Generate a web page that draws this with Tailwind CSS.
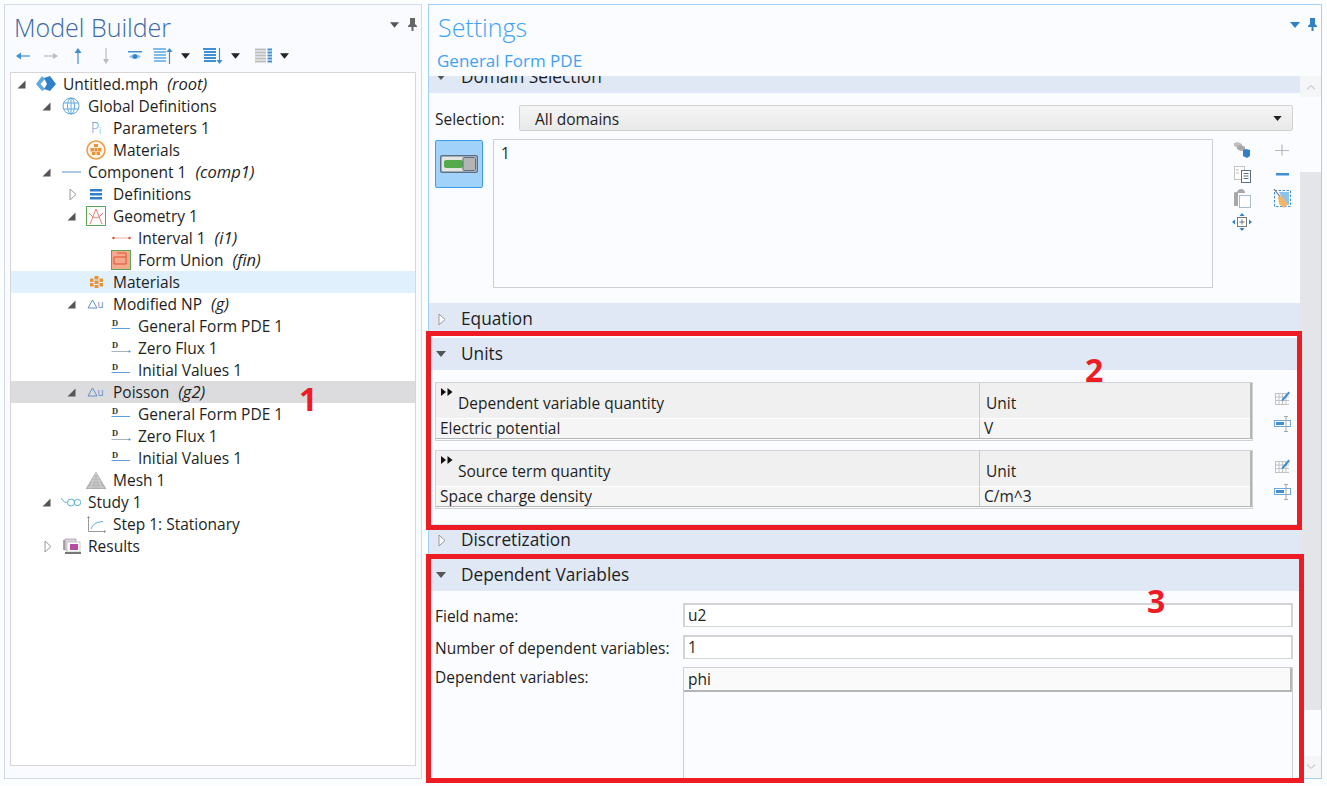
<!DOCTYPE html>
<html lang="en">
<head>
    <meta charset="UTF-8"/>
    <title>Model Builder - Settings</title>
    <script src="https://cdn.jsdelivr.net/npm/@tailwindcss/browser@4"></script>
</head>
<body class="relative h-[786px] w-[1327px] overflow-hidden bg-[#fcfdff] font-['Open_Sans',sans-serif] text-[15.5px] text-[#1e1e1e]">

<!-- Shared icons -->
<svg class="hidden" xmlns="http://www.w3.org/2000/svg">
    <symbol id="open" viewBox="0 0 9 9"><polygon points="8.5,0.5 8.5,8.5 0.5,8.5" fill="#555"/></symbol>
    <symbol id="closed" viewBox="0 0 8 13"><polygon points="1,1 7,6.5 1,12" fill="#fff" stroke="#9a9a9a"/></symbol>
    <symbol id="caret" viewBox="0 0 10 6"><polygon points="0,0 10,0 5,6" fill="#222"/></symbol>
    <symbol id="ffwd" viewBox="0 0 12 8"><polygon points="0,0 5,4 0,8" fill="#111"/><polygon points="6.5,0 11.5,4 6.5,8" fill="#111"/></symbol>
    <symbol id="pde" viewBox="0 0 20 16">
        <text x="1" y="7.5" font-family="Liberation Serif" font-weight="700" font-size="8.5" fill="#333">D</text>
        <line x1="0.5" y1="10.5" x2="19" y2="10.5" stroke="#5a9fd8"/>
    </symbol>
    <symbol id="flux" viewBox="0 0 20 16">
        <text x="1" y="7.5" font-family="Liberation Serif" font-weight="700" font-size="8.5" fill="#333">D</text>
        <line x1="0.5" y1="11.5" x2="18" y2="11.5" stroke="#a9b4c2"/><circle cx="18.5" cy="11.5" r="1" fill="#3f8fd2"/>
    </symbol>
    <symbol id="physics" viewBox="0 0 18 12">
        <polygon points="1,10 5.5,2 10,10" fill="none" stroke="#5f8fc8"/>
        <text x="10.5" y="10" font-family="Open Sans" font-size="10" fill="#5f8fc8">u</text>
    </symbol>
    <symbol id="table-edit" viewBox="0 0 16 16">
        <path d="M1 3.5h11M1 7h14M1 10.5h14M1 14.5h14M1.5 3v12M5 3v12M8.500 3v12M12 3v12" stroke="#c2c2c2" fill="none"/>
        <path d="M8 9l6.500-7.500 1.500 1.500-6.500 7.500-2 .500z" fill="#3f8fd2"/>
    </symbol>
    <symbol id="table-size" viewBox="0 0 18 16">
        <rect x="0.500" y="4.500" width="16" height="6" fill="#fff" stroke="#6ea8d8"/>
        <rect x="2" y="6" width="8" height="3" fill="#3f8fd2"/>
        <path d="M12 1v14M10 .5h4M10 15.500h4" stroke="#a8a8a8" fill="none"/>
    </symbol>
</svg>

<div class="flex gap-[6px] pl-[4px] pt-[4px]">

    <!-- Model Builder -->
    <section class="flex h-[775px] w-[418px] flex-col border border-[#d3dbe9] bg-[#f9fbff]">
        <div class="flex h-[39px] shrink-0 items-center justify-between pl-[9px] pr-[4px]">
            <h1 class="pt-[6px] text-[25px] font-light text-[#3d69a6]">Model Builder</h1>
            <div class="flex items-center gap-[9px]">
                <svg class="h-[6px] w-[9px]" viewBox="0 0 10 6"><polygon points="0,0 10,0 5,6" fill="#555"/></svg>
                <svg class="h-[13px] w-[9px]" viewBox="0 0 9 13"><path d="M2 0h5v6l2 2v1H5.500v4h-2V9H0V8l2-2z" fill="#666"/></svg>
            </div>
        </div>
        <div class="flex h-[28px] shrink-0 items-center pb-[5px] pl-[11px]">
            <svg class="h-[10px] w-[14px]" viewBox="0 0 14 10"><path d="M4 5h10" stroke="#3f8fd2" stroke-width="1.200"/><polygon points="0,5 5,1.500 5,8.500" fill="#3f8fd2"/></svg>
            <svg class="ml-[14px] h-[10px] w-[14px]" viewBox="0 0 14 10"><path d="M0 5h10" stroke="#bbb" stroke-width="1.200"/><polygon points="14,5 9,2 9,8" fill="#bbb"/></svg>
            <svg class="ml-[15px] h-[16px] w-[10px]" viewBox="0 0 10 16"><path d="M5 4v12" stroke="#3f8fd2" stroke-width="1.200"/><polygon points="5,0 1.500,5 8.500,5" fill="#3f8fd2"/></svg>
            <svg class="ml-[18px] h-[16px] w-[10px]" viewBox="0 0 10 16"><path d="M5 0v12" stroke="#bbb" stroke-width="1.200"/><polygon points="5,16 2,11 8,11" fill="#bbb"/></svg>
            <svg class="ml-[17px] h-[10px] w-[14px]" viewBox="0 0 14 10"><rect x="0" y="0" width="14" height="1.500" fill="#3f8fd2"/><path d="M1 5.500Q7 0.500 13 5.500Q7 10.500 1 5.500z" fill="#8fc0e8"/><circle cx="7" cy="5.500" r="2.200" fill="#2f7fc4"/></svg>
            <svg class="ml-[11px] h-[16px] w-[20px]" viewBox="0 0 20 16"><path d="M0 1h13M1 4h12M1 7h12M1 10h12M1 13h12" stroke="#5ba6e0" stroke-width="1.500"/><path d="M16.500 3v13" stroke="#3f8fd2" stroke-width="1.200"/><polygon points="16.500,0 13.500,4 19.500,4" fill="#3f8fd2"/></svg>
            <svg class="ml-[8px] h-[6px] w-[9px]"><use href="#caret"/></svg>
            <svg class="ml-[13px] h-[16px] w-[20px]" viewBox="0 0 20 16"><path d="M0 1h13M1 4h12M1 7h12M1 10h12M1 13h12" stroke="#3f8fd2" stroke-width="1.800"/><path d="M16.500 0v13" stroke="#3f8fd2" stroke-width="1.200"/><polygon points="16.500,16 13.500,12 19.500,12" fill="#3f8fd2"/></svg>
            <svg class="ml-[8px] h-[6px] w-[9px]"><use href="#caret"/></svg>
            <svg class="ml-[15px] h-[16px] w-[17px]" viewBox="0 0 17 16"><path d="M0 1.500h11M0 4.500h11M0 7.500h11M0 10.500h11M0 13.500h11" stroke="#bdbdbd" stroke-width="1.800"/><path d="M12.500 1.500h4.500M12.500 4.500h4.500M12.500 7.500h4.500M12.500 10.500h4.500M12.500 13.500h4.500" stroke="#3f8fd2" stroke-width="1.800"/></svg>
            <svg class="ml-[8px] h-[6px] w-[9px]"><use href="#caret"/></svg>
        </div>

        <!-- Tree -->
        <div class="mx-[5px] h-[694px] border border-[#d6d6d6] bg-white [&>div>span:last-child]:pt-[2px] [&_i]:text-[16.5px] [&_i]:leading-none">
            <div class="flex h-[22px] items-center pl-[5px]">
                <span class="flex w-[18px] pl-[1px]"><svg class="h-[9px] w-[9px]"><use href="#open"/></svg></span>
                <span class="flex w-[24px] justify-center"><svg class="h-[16px] w-[20px]" viewBox="0 0 20 16"><polygon points="6,0 0,8 6,15 9,13 4.500,8 9,3" fill="#62a8de"/><polygon points="8,2 14,0 20,8 14,15 8,13 11,8" fill="#2f80c8"/></svg></span>
                <span class="ml-[5px] whitespace-nowrap">Untitled.mph<i class="ml-[9px]">(root)</i></span>
            </div>
            <div class="flex h-[22px] items-center pl-[30px]">
                <span class="flex w-[18px] pl-[1px]"><svg class="h-[9px] w-[9px]"><use href="#open"/></svg></span>
                <span class="flex w-[24px] justify-center"><svg class="h-[18px] w-[18px]" viewBox="0 0 18 18" fill="none" stroke="#62a8de"><circle cx="9" cy="9" r="8"/><ellipse cx="9" cy="9" rx="3.500" ry="8"/><path d="M9 1v16M1.500 6h15M1.500 12h15"/></svg></span>
                <span class="ml-[5px] whitespace-nowrap">Global Definitions</span>
            </div>
            <div class="flex h-[22px] items-center pl-[55px]">
                <span class="w-[18px]"></span>
                <span class="flex w-[24px] justify-center"><svg class="h-[16px] w-[16px]" viewBox="0 0 16 16"><text x="3" y="13" font-family="Open Sans" font-size="14" font-weight="300" fill="#4d9ada">P</text><text x="11" y="14" font-family="Open Sans" font-size="9" font-weight="300" fill="#4d9ada">i</text></svg></span>
                <span class="ml-[5px] whitespace-nowrap">Parameters 1</span>
            </div>
            <div class="flex h-[22px] items-center pl-[55px]">
                <span class="w-[18px]"></span>
                <span class="flex w-[24px] justify-center"><svg class="h-[20px] w-[20px]" viewBox="0 0 20 20"><circle cx="10" cy="10" r="9" fill="#fdf3e6" stroke="#ec9c45" stroke-width="1.500"/><path d="M8 4h4v3H8zM4.500 8h3.500v3.500H4.500zM8.500 8h3v3.500h-3zM12 8h3.500v3.500H12zM6 12h3.500v3H6zM10.500 12h3.500v3h-3.500z" fill="#e8923a"/></svg></span>
                <span class="ml-[5px] whitespace-nowrap">Materials</span>
            </div>
            <div class="flex h-[22px] items-center pl-[30px]">
                <span class="flex w-[18px] pl-[1px]"><svg class="h-[9px] w-[9px]"><use href="#open"/></svg></span>
                <span class="flex w-[24px] justify-center"><svg class="h-[2px] w-[19px]" viewBox="0 0 19 2"><path d="M0 1h19" stroke="#5f8fc8"/></svg></span>
                <span class="ml-[5px] whitespace-nowrap">Component 1<i class="ml-[9px]">(comp1)</i></span>
            </div>
            <div class="flex h-[22px] items-center pl-[55px]">
                <span class="flex w-[18px] pl-[3px]"><svg class="h-[13px] w-[8px]"><use href="#closed"/></svg></span>
                <span class="flex w-[24px] justify-center"><svg class="h-[11px] w-[12px]" viewBox="0 0 12 11"><path d="M0 0h12v2.500H0zM0 4h12v2.500H0zM0 8h12v2.500H0z" fill="#2f80c8"/></svg></span>
                <span class="ml-[5px] whitespace-nowrap">Definitions</span>
            </div>
            <div class="flex h-[22px] items-center pl-[55px]">
                <span class="flex w-[18px] pl-[1px]"><svg class="h-[9px] w-[9px]"><use href="#open"/></svg></span>
                <span class="flex w-[24px] justify-center"><svg class="h-[20px] w-[20px]" viewBox="0 0 20 20"><rect x="0.500" y="0.500" width="19" height="19" fill="#fff" stroke="#58a858"/><path d="M4 18L10 3l6 15M3 7q7 10 14 0" fill="none" stroke="#e88070"/></svg></span>
                <span class="ml-[5px] whitespace-nowrap">Geometry 1</span>
            </div>
            <div class="flex h-[22px] items-center pl-[80px]">
                <span class="w-[18px]"></span>
                <span class="flex w-[24px] justify-center"><svg class="h-[6px] w-[19px]" viewBox="0 0 19 6"><path d="M0 3h19" stroke="#f0b0a0"/><circle cx="1.500" cy="3" r="1.200" fill="#e05030"/><circle cx="17.500" cy="3" r="1.200" fill="#e05030"/></svg></span>
                <span class="ml-[5px] whitespace-nowrap">Interval 1<i class="ml-[9px]">(i1)</i></span>
            </div>
            <div class="flex h-[22px] items-center pl-[80px]">
                <span class="w-[18px]"></span>
                <span class="flex w-[24px] justify-center"><svg class="h-[20px] w-[20px]" viewBox="0 0 20 20"><rect x="0.500" y="0.500" width="19" height="19" fill="#f4a98c" stroke="#58a858"/><path d="M6 3h9v11H3V7h12" fill="none" stroke="#e05030"/></svg></span>
                <span class="ml-[5px] whitespace-nowrap">Form Union<i class="ml-[9px]">(fin)</i></span>
            </div>
            <div class="flex h-[22px] items-center bg-[#e0f0fd] pl-[55px]">
                <span class="w-[18px]"></span>
                <span class="flex w-[24px] justify-center"><svg class="h-[12px] w-[13px]" viewBox="0 0 13 12"><path d="M4.500 0h4v3.500h-4zM0 2.500h3.500v3.500H0zM9.500 2.500H13v3.500H9.500zM4.500 4.500h4v3.500h-4zM0 7h3.500v3.500H0zM9.500 7H13v3.500H9.500zM4.500 9h4v3h-4z" fill="#e8923a"/></svg></span>
                <span class="ml-[5px] whitespace-nowrap">Materials</span>
            </div>
            <div class="flex h-[22px] items-center pl-[55px]">
                <span class="flex w-[18px] pl-[1px]"><svg class="h-[9px] w-[9px]"><use href="#open"/></svg></span>
                <span class="flex w-[24px] justify-center"><svg class="h-[12px] w-[18px]"><use href="#physics"/></svg></span>
                <span class="ml-[5px] whitespace-nowrap">Modified NP<i class="ml-[9px]">(g)</i></span>
            </div>
            <div class="flex h-[22px] items-center pl-[80px]">
                <span class="w-[18px]"></span>
                <span class="flex w-[24px] justify-center"><svg class="h-[16px] w-[20px]"><use href="#pde"/></svg></span>
                <span class="ml-[5px] whitespace-nowrap">General Form PDE 1</span>
            </div>
            <div class="flex h-[22px] items-center pl-[80px]">
                <span class="w-[18px]"></span>
                <span class="flex w-[24px] justify-center"><svg class="h-[16px] w-[20px]"><use href="#flux"/></svg></span>
                <span class="ml-[5px] whitespace-nowrap">Zero Flux 1</span>
            </div>
            <div class="flex h-[22px] items-center pl-[80px]">
                <span class="w-[18px]"></span>
                <span class="flex w-[24px] justify-center"><svg class="h-[16px] w-[20px]"><use href="#pde"/></svg></span>
                <span class="ml-[5px] whitespace-nowrap">Initial Values 1</span>
            </div>
            <div class="flex h-[22px] items-center bg-[#dcdcde] pl-[55px]">
                <span class="flex w-[18px] pl-[1px]"><svg class="h-[9px] w-[9px]"><use href="#open"/></svg></span>
                <span class="flex w-[24px] justify-center"><svg class="h-[12px] w-[18px]"><use href="#physics"/></svg></span>
                <span class="ml-[5px] whitespace-nowrap">Poisson<i class="ml-[9px]">(g2)</i></span>
            </div>
            <div class="flex h-[22px] items-center pl-[80px]">
                <span class="w-[18px]"></span>
                <span class="flex w-[24px] justify-center"><svg class="h-[16px] w-[20px]"><use href="#pde"/></svg></span>
                <span class="ml-[5px] whitespace-nowrap">General Form PDE 1</span>
            </div>
            <div class="flex h-[22px] items-center pl-[80px]">
                <span class="w-[18px]"></span>
                <span class="flex w-[24px] justify-center"><svg class="h-[16px] w-[20px]"><use href="#flux"/></svg></span>
                <span class="ml-[5px] whitespace-nowrap">Zero Flux 1</span>
            </div>
            <div class="flex h-[22px] items-center pl-[80px]">
                <span class="w-[18px]"></span>
                <span class="flex w-[24px] justify-center"><svg class="h-[16px] w-[20px]"><use href="#pde"/></svg></span>
                <span class="ml-[5px] whitespace-nowrap">Initial Values 1</span>
            </div>
            <div class="flex h-[22px] items-center pl-[55px]">
                <span class="w-[18px]"></span>
                <span class="flex w-[24px] justify-center"><svg class="h-[17px] w-[20px]" viewBox="0 0 20 17"><polygon points="10,0 20,17 0,17" fill="#b5b5b5" stroke="#999" stroke-width="0.500"/><path d="M7 6h6M5 9h10M3.500 12h13M2 15h16M10 0L4 17M10 0l6 17" stroke="#e4e4e4" stroke-width="0.500" fill="none"/></svg></span>
                <span class="ml-[5px] whitespace-nowrap">Mesh 1</span>
            </div>
            <div class="flex h-[22px] items-center pl-[30px]">
                <span class="flex w-[18px] pl-[1px]"><svg class="h-[9px] w-[9px]"><use href="#open"/></svg></span>
                <span class="flex w-[24px] justify-center"><svg class="h-[10px] w-[20px]" viewBox="0 0 20 10" fill="none" stroke="#58b0d0"><circle cx="10" cy="5.500" r="3.500"/><circle cx="16.500" cy="5.500" r="3.200"/><path d="M13.500 5q0-1-.500-1M6.500 5Q4 7 0 1"/></svg></span>
                <span class="ml-[5px] whitespace-nowrap">Study 1</span>
            </div>
            <div class="flex h-[22px] items-center pl-[55px]">
                <span class="w-[18px]"></span>
                <span class="flex w-[24px] justify-center"><svg class="h-[17px] w-[19px]" viewBox="0 0 19 17" fill="none"><path d="M1.500 1v14.500H18" stroke="#999"/><path d="M0 2l1.500-2 1.500 2zM17 14l2 1.500-2 1.500z" fill="#888"/><path d="M4 13Q6 6 16 5.500" stroke="#58b0d0"/></svg></span>
                <span class="ml-[5px] whitespace-nowrap">Step 1: Stationary</span>
            </div>
            <div class="flex h-[22px] items-center pl-[30px]">
                <span class="flex w-[18px] pl-[3px]"><svg class="h-[13px] w-[8px]"><use href="#closed"/></svg></span>
                <span class="flex w-[24px] justify-center"><svg class="h-[17px] w-[19px]" viewBox="0 0 19 17"><path d="M1 2h10v10H1z" fill="#aaa"/><path d="M3 1h11v11H3z" fill="#e0d4e4" stroke="#8a6a8f" stroke-width="0.500"/><rect x="5" y="4" width="13" height="10" fill="#fff" stroke="#999" stroke-width="0.500"/><rect x="8" y="6" width="8" height="6" fill="#b64da0"/><path d="M3 15h16" stroke="#777" stroke-width="2"/></svg></span>
                <span class="ml-[5px] whitespace-nowrap">Results</span>
            </div>
        </div>
    </section>

    <!-- Settings -->
    <section class="flex h-[775px] w-[894px] flex-col border border-[#a0d0f8] bg-[#fafcff]">
        <div class="flex h-[39px] shrink-0 items-center justify-between pl-[9px] pr-[4px]">
            <h1 class="pt-[6px] text-[25px] font-light text-[#3fa3f2]">Settings</h1>
            <div class="flex items-center gap-[7px]">
                <svg class="h-[6px] w-[12px]" viewBox="0 0 10 6"><polygon points="0,0 10,0 5,6" fill="#2f80c8"/></svg>
                <svg class="h-[13px] w-[9px]" viewBox="0 0 9 13"><path d="M2 0h5v6l2 2v1H5.500v4h-2V9H0V8l2-2z" fill="#2f80c8"/></svg>
            </div>
        </div>
        <div class="h-[32px] shrink-0 pl-[8px] text-[17px] leading-[34px] text-[#3fa3f2]">General Form PDE</div>

        <div class="flex min-h-0 flex-1">
            <div class="w-[871px] overflow-hidden">
                <div class="-mt-[15px]">

                    <!-- Domain Selection -->
                    <div class="flex h-[32px] items-center bg-[#dfe8f4] text-[17.25px]">
                        <span class="flex w-[32px] pl-[7px]"><svg class="h-[6px] w-[10px]" viewBox="0 0 10 6"><polygon points="0,0 10,0 5,6" fill="#555"/></svg></span>
                        Domain Selection
                    </div>
                    <div class="flex items-center pl-[6px] pr-[7px] pt-[12px]">
                        <span class="w-[84px] pt-[2px] leading-[20px]">Selection:</span>
                        <div class="flex h-[26px] flex-1 items-center justify-between rounded-[2px] border border-[#d2d2d2] bg-gradient-to-b from-[#f5f5f5] to-[#e9e9e9] pl-[15px] pr-[10px]">
                            <span class="pt-[2px] leading-[20px]">All domains</span>
                            <svg class="h-[5px] w-[9px]"><use href="#caret"/></svg>
                        </div>
                    </div>
                    <div class="flex pl-[6px] pt-[8px]">
                        <div class="mt-[1px] flex h-[48px] w-[48px] items-center justify-center rounded-[2px] border border-[#3e9cf0] bg-[#a0d2fa]">
                            <svg class="h-[18px] w-[38px]" viewBox="0 0 38 18"><rect x="0.750" y="0.750" width="36.500" height="16.500" rx="1.500" fill="#e4e4e0" stroke="#5c7188" stroke-width="1.500"/><rect x="4" y="5" width="19" height="8" rx="2" fill="#55ab4b"/><rect x="23" y="2.500" width="12.500" height="13" rx="1" fill="#b4b4b4" stroke="#5c7188"/></svg>
                        </div>
                        <div class="ml-[10px] h-[149px] w-[720px] border border-[#cfcfcf] pl-[7px] pt-[2px]">1</div>
                        <div class="-mt-[1px] ml-[19px] grid h-[96px] grid-cols-[20px_20px] grid-rows-4 items-center justify-items-center gap-x-[20px]">
                            <svg class="h-[16px] w-[16px]" viewBox="0 0 16 16"><path d="M0 1l4-1 4 2v3l-4 1-4-2z" fill="#c0c0c0"/><path d="M3 4l4-1 4 2v3l-4 1-4-2z" fill="#a8a8a8"/><path d="M9 8l3-1 4 1v6l-3 2-4-2z" fill="#2f80c8"/></svg>
                            <svg class="h-[12px] w-[14px]" viewBox="0 0 14 12"><path d="M0 6.500h14M7 0.500v11" stroke="#b8b8b8" stroke-width="1.200"/></svg>
                            <svg class="h-[17px] w-[17px]" viewBox="0 0 17 17"><rect x="0.500" y="0.500" width="10" height="13" fill="#fff" stroke="#c4c4c4"/><path d="M2 4h3M2 7h3" stroke="#bbb"/><rect x="7.500" y="4.500" width="9" height="12" fill="#fff" stroke="#5c7188"/><path d="M9.500 7.500h5M9.500 10h5M9.500 12.500h5" stroke="#5c7188" stroke-width="1.200"/></svg>
                            <svg class="h-[3px] w-[13px]" viewBox="0 0 13 3"><rect width="13" height="2.500" fill="#3f8fd2"/></svg>
                            <svg class="h-[19px] w-[17px]" viewBox="0 0 17 19"><path d="M0 4Q0 3 2 3h1Q4 0 7 0t4 3v1H4v13H0z" fill="#a8a8a8"/><rect x="5.500" y="6.500" width="11" height="12" fill="#fff" stroke="#a9bcd0"/></svg>
                            <svg class="h-[19px] w-[18px]" viewBox="0 0 18 19"><rect x="1.500" y="1.500" width="16" height="16" fill="#fff" stroke="#3f8fd2" stroke-dasharray="2.500 1.500"/><polygon points="6,3 16,3 16,16 12,16" fill="#8cc4f0"/><path d="M1 0l7 9" stroke="#777" stroke-width="1.200"/><path d="M5 8l4-1 6 8-4 4-5-4z" fill="#f2b56c"/></svg>
                            <svg class="h-[18px] w-[20px]" viewBox="0 0 20 18"><rect x="5.500" y="4.500" width="9" height="9" fill="#fff" stroke="#777"/><path d="M10 6.500v5M7.500 9h5" stroke="#777"/><path d="M10 0l-2.500 3h5zM10 18l-2.500-3h5zM0 9l3-2.500v5zM20 9l-3-2.500v5z" fill="#2f80c8"/></svg>
                        </div>
                    </div>

                    <!-- Equation -->
                    <div class="mt-[15px] flex h-[32px] items-center bg-[#dfe8f4] text-[17.25px]">
                        <span class="flex w-[32px] pl-[9px]"><svg class="h-[13px] w-[8px]"><use href="#closed"/></svg></span>
                        Equation
                    </div>

                    <!-- Units -->
                    <div class="mt-[3px] flex h-[32px] items-center bg-[#dfe8f4] text-[17.25px]">
                        <span class="flex w-[32px] pl-[7px]"><svg class="h-[6px] w-[10px]" viewBox="0 0 10 6"><polygon points="0,0 10,0 5,6" fill="#555"/></svg></span>
                        Units
                    </div>
                    <div class="flex pl-[6px] pt-[12px]">
                        <div class="h-[59px] w-[818px] border border-[#d2d2d2]">
                            <div class="grid h-[56px] grid-cols-[543px_1fr] border-r-2 border-b-2 border-[#b5b5b5]">
                                <div class="h-[35px] bg-[#f0f0f0] pl-[5px] pt-[5px] leading-[14px]"><svg class="block h-[8px] w-[12px]"><use href="#ffwd"/></svg><span class="ml-[17px]">Dependent variable quantity</span></div>
                                <div class="h-[35px] border-l border-[#c8c8c8] bg-[#f0f0f0] pl-[6px] pt-[13px] leading-[14px]">Unit</div>
                                <div class="h-[20px] border-t border-white bg-[#f5f5f5] pl-[4px] leading-[18px]">Electric potential</div>
                                <div class="h-[20px] border-l border-t border-l-[#c8c8c8] border-t-white bg-[#f5f5f5] pl-[4px] leading-[18px]">V</div>
                            </div>
                        </div>
                        <div class="ml-[21px] flex flex-col gap-[10px] pt-[8px]">
                            <svg class="h-[16px] w-[16px]"><use href="#table-edit"/></svg>
                            <svg class="h-[16px] w-[18px]"><use href="#table-size"/></svg>
                        </div>
                    </div>
                    <div class="flex pl-[6px] pt-[9px]">
                        <div class="h-[59px] w-[818px] border border-[#d2d2d2]">
                            <div class="grid h-[56px] grid-cols-[543px_1fr] border-r-2 border-b-2 border-[#b5b5b5]">
                                <div class="h-[35px] bg-[#f0f0f0] pl-[5px] pt-[5px] leading-[14px]"><svg class="block h-[8px] w-[12px]"><use href="#ffwd"/></svg><span class="ml-[17px]">Source term quantity</span></div>
                                <div class="h-[35px] border-l border-[#c8c8c8] bg-[#f0f0f0] pl-[6px] pt-[13px] leading-[14px]">Unit</div>
                                <div class="h-[20px] border-t border-white bg-[#f5f5f5] pl-[4px] leading-[18px]">Space charge density</div>
                                <div class="h-[20px] border-l border-t border-l-[#c8c8c8] border-t-white bg-[#f5f5f5] pl-[4px] leading-[18px]">C/m^3</div>
                            </div>
                        </div>
                        <div class="ml-[21px] flex flex-col gap-[10px] pt-[8px]">
                            <svg class="h-[16px] w-[16px]"><use href="#table-edit"/></svg>
                            <svg class="h-[16px] w-[18px]"><use href="#table-size"/></svg>
                        </div>
                    </div>

                    <!-- Discretization -->
                    <div class="mt-[15px] flex h-[32px] items-center bg-[#dfe8f4] text-[17.25px]">
                        <span class="flex w-[32px] pl-[9px]"><svg class="h-[13px] w-[8px]"><use href="#closed"/></svg></span>
                        Discretization
                    </div>

                    <!-- Dependent Variables -->
                    <div class="mt-[3px] flex h-[32px] items-center bg-[#dfe8f4] text-[17.25px]">
                        <span class="flex w-[32px] pl-[7px]"><svg class="h-[6px] w-[10px]" viewBox="0 0 10 6"><polygon points="0,0 10,0 5,6" fill="#555"/></svg></span>
                        Dependent Variables
                    </div>
                    <div class="flex flex-col gap-[8px] pl-[6px] pr-[7px] pt-[12px]">
                        <div class="flex items-center">
                            <span class="w-[248px] pt-[2px] leading-[20px]">Field name:</span>
                            <div class="h-[24px] flex-1 border-2 border-b border-[#d4d4d4] bg-white pl-[3px] leading-[21px]">u2</div>
                        </div>
                        <div class="flex items-center">
                            <span class="w-[248px] pt-[2px] leading-[20px]">Number of dependent variables:</span>
                            <div class="h-[24px] flex-1 border-2 border-b border-[#d4d4d4] bg-white pl-[3px] leading-[21px]">1</div>
                        </div>
                        <div class="flex">
                            <span class="w-[248px] leading-[20px]">Dependent variables:</span>
                            <div class="h-[120px] flex-1 border-x border-t border-[#cfcfcf]">
                                <div class="h-[24px] border-r-2 border-b-2 border-[#b5b5b5] bg-[#fafafa] pl-[4px] leading-[22px]">phi</div>
                            </div>
                        </div>
                    </div>
                </div>
            </div>

            <!-- Scrollbar -->
            <div class="flex w-[21px] flex-col">
                <div class="flex h-[21px] items-center justify-center bg-[#f5f6f8]"><svg class="h-[6px] w-[10px]" viewBox="0 0 10 6"><path d="M1 5.500l4-4 4 4" fill="none" stroke="#d0d0d0" stroke-width="1.200"/></svg></div>
                <div class="h-[75px]"></div>
                <div class="h-[538px] bg-[#e3e5e8]"></div>
                <div class="flex-1"></div>
                <div class="flex h-[22px] items-center justify-center bg-[#f5f6f8]"><svg class="h-[6px] w-[10px]" viewBox="0 0 10 6"><path d="M1 .5l4 4 4-4" fill="none" stroke="#d0d0d0" stroke-width="1.200"/></svg></div>
            </div>
        </div>
    </section>
</div>

<!-- Red callouts drawn over the screenshot -->
<span class="absolute left-[299px] top-[383px] text-[32px] leading-[32px] font-bold text-[#ed1c24]">1</span>
<div class="absolute left-[426px] top-[331px] h-[199px] w-[876px] border-[5px] border-[#ed1c24]"></div>
<span class="absolute left-[1085px] top-[354px] text-[32px] leading-[32px] font-bold text-[#ed1c24]">2</span>
<div class="absolute left-[426px] top-[554px] h-[229px] w-[878px] border-[5px] border-[#ed1c24]"></div>
<span class="absolute left-[1147px] top-[585px] text-[32px] leading-[32px] font-bold text-[#ed1c24]">3</span>

</body>
</html>
